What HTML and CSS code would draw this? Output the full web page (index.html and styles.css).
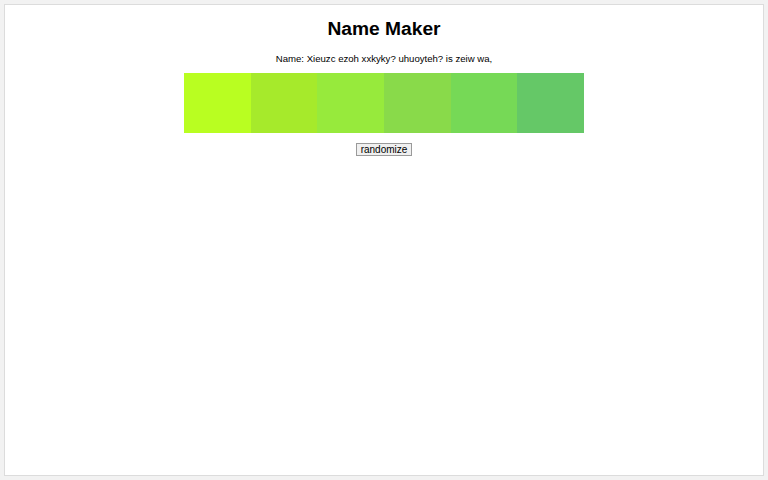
FILE: index.html
```html
<!DOCTYPE html>
<html>
<head>
<meta charset="utf-8">
<link rel="stylesheet" href="styles.css">
</head>
<body>
<div class="panel">
  <h1 class="title">Name Maker</h1>
  <p class="name">Name: Xieuzc ezoh xxkyky? uhuoyteh? is zeiw wa,</p>
  <div class="swatches">
    <div class="sw s1"></div>
    <div class="sw s2"></div>
    <div class="sw s3"></div>
    <div class="sw s4"></div>
    <div class="sw s5"></div>
    <div class="sw s6"></div>
  </div>
  <div class="actions"><button class="btn">randomize</button></div>
</div>
</body>
</html>
```
FILE: styles.css
```css
html, body { margin: 0; padding: 0; }
body {
  background: #f2f2f2;
  padding: 4px;
  font-family: "Liberation Sans", Arial, sans-serif;
  width: 760px;
  height: 472px;
}
.panel {
  box-sizing: border-box;
  background: #fff;
  border: 1px solid #dcdcdc;
  width: 760px;
  height: 472px;
  padding-top: 12px;
}
.title {
  margin: 0;
  text-align: center;
  font-size: 19.2px;
  font-weight: bold;
  line-height: 23px;
  color: #000;
}
.name {
  margin: 13px 0 0;
  text-align: center;
  font-size: 9.6px;
  line-height: 12px;
  color: #000;
}
.swatches {
  display: flex;
  width: 400px;
  height: 60px;
  margin: 8px auto 0;
}
.sw { flex: 1; }
.s1 { background: #b9fe21; }
.s2 { background: #a6ea2b; }
.s3 { background: #97ea3c; }
.s4 { background: #89da4a; }
.s5 { background: #76d956; }
.s6 { background: #65c867; }
.actions {
  text-align: center;
  margin-top: 10px;
  line-height: 0;
}
.btn {
  font-family: "Liberation Sans", Arial, sans-serif;
  font-size: 10px;
  line-height: 11px;
  padding: 0 4px;
  border: 1px solid #9a9a9a;
  background: #f0f0f0;
  color: #000;
  border-radius: 0;
  vertical-align: top;
}
```
